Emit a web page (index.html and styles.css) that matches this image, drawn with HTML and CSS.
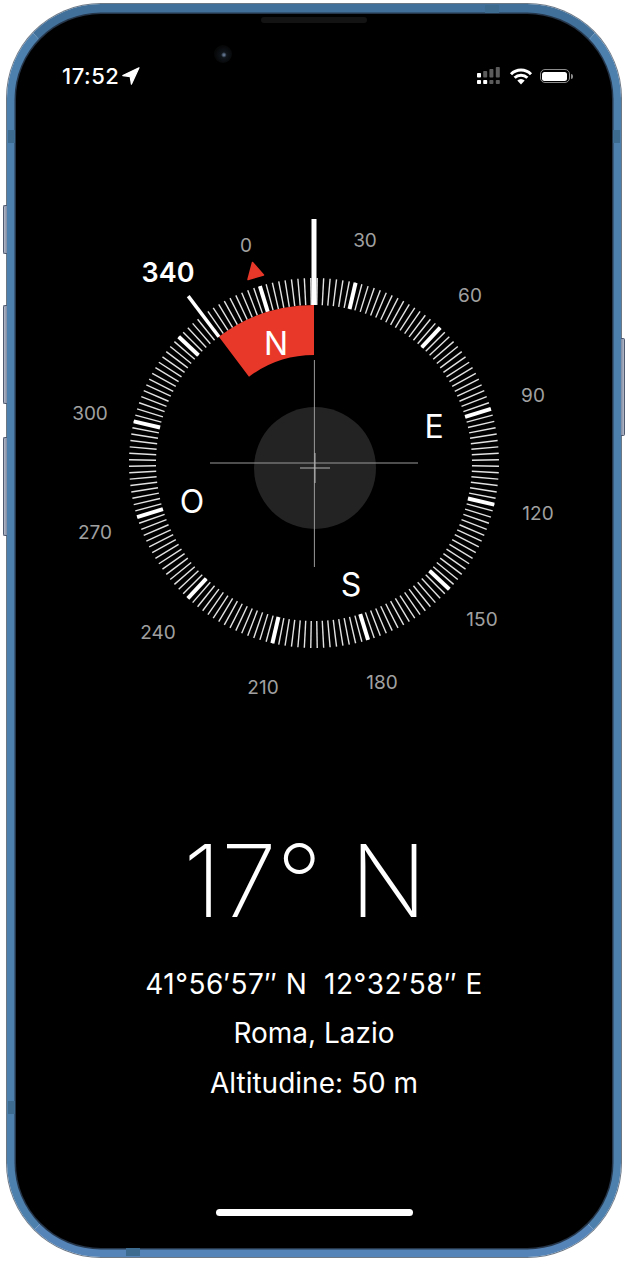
FILE: index.html
```html
<!DOCTYPE html>
<html lang="it">
<head>
<meta charset="utf-8">
<title>Bussola</title>
<link rel="stylesheet" href="styles.css">
</head>
<body>
<div class="phone">
  <span class="btn btn-mute"></span>
  <span class="btn btn-up"></span>
  <span class="btn btn-down"></span>
  <span class="btn btn-power"></span>
  <span class="band band-top"></span>
  <span class="band band-bottom"></span>
  <span class="band band-left"></span>
  <span class="band band-right"></span>
  <span class="band band-left2"></span>
  <main class="screen">
    <span class="speaker"></span>
    <span class="camera"></span>
    <header class="status">
      <div class="status-left">
        <span class="time">17:52</span>
        <svg class="arrow" width="18" height="18" viewBox="0 0 18 18"><path d="M17 .8 .8 8.6 8.2 9.6 9.4 17.2Z" stroke="#fff" stroke-width="1.2" stroke-linejoin="round" fill="#fff"/></svg>
      </div>
      <div class="status-right">
        <svg class="signal" width="24" height="18" viewBox="0 0 24 18">
          <rect class="on" x="0" y="13" width="4" height="4" rx=".8"/>
          <rect class="on" x="6.2" y="13" width="4" height="4" rx=".8"/>
          <rect class="dim" x="12.4" y="13" width="4" height="4" rx=".8"/>
          <rect class="dim" x="18.8" y="13" width="4" height="4" rx=".8"/>
          <rect class="on" x="0" y="6" width="4" height="4.6" rx=".8"/>
          <rect class="dim" x="6.2" y="4" width="4" height="6.6" rx=".8"/>
          <rect class="dim" x="12.4" y="2" width="4" height="8.6" rx=".8"/>
          <rect class="dim" x="18.8" y="0" width="4" height="10.6" rx=".8"/>
        </svg>
        <svg class="wifi" width="24" height="17" viewBox="0 0 24 17">
          <path d="M2 6.2A14.2 14.2 0 0 1 22 6.2" class="arc"/>
          <path d="M5.6 9.8A9.1 9.1 0 0 1 18.4 9.8" class="arc"/>
          <path d="M12 16.4 8.3 12.6A5.2 5.2 0 0 1 15.7 12.6Z" fill="#fff"/>
        </svg>
        <div class="battery"><span class="battery-fill"></span></div>
        <span class="nub"></span>
      </div>
    </header>

    <svg class="compass" width="596" height="500" viewBox="16 200 596 500">
      <defs>
        <line id="t1" x1="0" y1="-185" x2="0" y2="-158" class="minor"/>
        <g id="t3"><use href="#t1"/><use href="#t1" transform="rotate(2)"/><use href="#t1" transform="rotate(4)"/></g>
        <g id="t15"><use href="#t3"/><use href="#t3" transform="rotate(6)"/><use href="#t3" transform="rotate(12)"/><use href="#t3" transform="rotate(18)"/><use href="#t3" transform="rotate(24)"/></g>
        <line id="m" x1="0" y1="-185" x2="0" y2="-158" class="major"/>
      </defs>
      <g transform="translate(314 463) rotate(-17)">
        <use href="#t15"/><use href="#t15" transform="rotate(30)"/><use href="#t15" transform="rotate(60)"/><use href="#t15" transform="rotate(90)"/>
        <use href="#t15" transform="rotate(120)"/><use href="#t15" transform="rotate(150)"/><use href="#t15" transform="rotate(180)"/><use href="#t15" transform="rotate(210)"/>
        <use href="#t15" transform="rotate(240)"/><use href="#t15" transform="rotate(270)"/><use href="#t15" transform="rotate(300)"/><use href="#t15" transform="rotate(330)"/>
        <use href="#m"/><use href="#m" transform="rotate(30)"/><use href="#m" transform="rotate(60)"/><use href="#m" transform="rotate(90)"/>
        <use href="#m" transform="rotate(120)"/><use href="#m" transform="rotate(150)"/><use href="#m" transform="rotate(180)"/><use href="#m" transform="rotate(210)"/>
        <use href="#m" transform="rotate(240)"/><use href="#m" transform="rotate(270)"/><use href="#m" transform="rotate(300)"/><use href="#m" transform="rotate(330)"/>
      </g>
      <g transform="translate(314 463)">
        <path class="sector" d="M0 -158A158 158 0 0 0 -95.1 -126.2L-65 -86.3A108 108 0 0 1 0 -108Z"/>
        <line class="needle" x1="0" y1="-158" x2="0" y2="-209" transform="rotate(-37)"/>
        <line class="heading" x1="0" y1="-158" x2="0" y2="-244"/>
      </g>
      <path class="sector" d="M252.5 262.5 263.5 275 248 279.5Z" stroke="#e8382a" stroke-width="1.5" stroke-linejoin="round"/>

      <circle class="bubble" cx="315" cy="468" r="61"/>
      <line class="cross" x1="314.4" y1="360" x2="314.4" y2="567"/>
      <line class="cross" x1="210" y1="463" x2="418" y2="463"/>
      <line class="level" x1="300" y1="468" x2="330" y2="468"/>
      <line class="level" x1="315" y1="453" x2="315" y2="483"/>

      <text class="num" x="246" y="252">0</text>
      <text class="num" x="365" y="247">30</text>
      <text class="num" x="470" y="302">60</text>
      <text class="num" x="533" y="402">90</text>
      <text class="num" x="538" y="520">120</text>
      <text class="num" x="482" y="626">150</text>
      <text class="num" x="382" y="689">180</text>
      <text class="num" x="263" y="694">210</text>
      <text class="num" x="158" y="639">240</text>
      <text class="num" x="95" y="539">270</text>
      <text class="num" x="90" y="420">300</text>
      <text class="bearing" x="168" y="282">340</text>
      <text class="card" x="276" y="355">N</text>
      <text class="card" x="434" y="438">E</text>
      <text class="card" x="351" y="596">S</text>
      <text class="card" x="192" y="513">O</text>
    </svg>

    <section class="readout">
      <h1 class="direction">17° N</h1>
      <p class="line coords">41°56′57″ N&nbsp; 12°32′58″ E</p>
      <p class="line">Roma, Lazio</p>
      <p class="line">Altitudine: 50 m</p>
    </section>
    <div class="home"></div>
  </main>
</div>
</body>
</html>
```
FILE: styles.css
```css
* { box-sizing: border-box; }
html, body { margin: 0; background: #fff; }
body { width: 630px; height: 1264px; padding: 4px 0 0 7px; overflow: hidden; font-family: Inter, "Liberation Sans", sans-serif; color: #fff; }

.phone {
  position: relative;
  width: 614px;
  height: 1253px;
  border-style: solid;
  border-width: 10px 9px 9px;
  border-color: #41719b #4e80ae #5484b8;
  border-radius: 94px;
  box-shadow: 0 0 0 1px #6d7885;
}
.screen {
  position: relative;
  display: flex;
  flex-direction: column;
  height: 100%;
  background: #000;
  border-radius: 85px;
  box-shadow: 0 0 0 1.5px #26364a;
  overflow: hidden;
}

.btn { position: absolute; width: 4px; background: linear-gradient(90deg, #b4bac8, #7d88a0); border-radius: 2px 0 0 2px; border: 1px solid #4f5a70; border-right: 0; }
.btn-mute { left: -13px; top: 191px; height: 49px; }
.btn-up { left: -13px; top: 291px; height: 99px; }
.btn-down { left: -13px; top: 423px; height: 99px; }
.btn-power { right: -13px; top: 324px; height: 98px; border-radius: 0 2px 2px 0; border: 1px solid #4f5a70; border-left: 0; background: linear-gradient(90deg, #7d88a0, #b4bac8); }

.band { position: absolute; background: #3d6a8f; z-index: 2; }
.band-top { left: 469px; top: -9px; width: 14px; height: 8px; }
.band-bottom { left: 110px; bottom: -8px; width: 14px; height: 8px; }
.band-left { left: -8px; top: 116px; width: 7px; height: 13px; }
.band-right { right: -8px; top: 116px; width: 7px; height: 13px; }
.band-left2 { left: -8px; top: 1087px; width: 7px; height: 13px; }

.speaker { position: absolute; left: 245px; top: 3px; width: 106px; height: 6px; border-radius: 3px; background: #131313; }
.camera { position: absolute; left: 198px; top: 31px; width: 18px; height: 18px; border-radius: 50%; background: radial-gradient(circle at 55% 55%, #5d6f88 0 6%, #10161c 20%, #070809 60%, #040404 100%); }

.status { display: flex; justify-content: space-between; align-items: center; height: 124px; padding: 0 39px 0 46px; }
.status-left { display: flex; align-items: center; gap: 3px; }
.time { font-size: 22px; font-weight: 500; line-height: 24px; letter-spacing: .5px; }
.status-right { display: flex; align-items: center; }
.signal { margin-right: 8px; }
.signal .on { fill: #fff; }
.signal .dim { fill: #5c5c5c; }
.wifi { margin-right: 7px; }
.wifi .arc { fill: none; stroke: #fff; stroke-width: 3; }
.battery { width: 30px; height: 14px; border: 1.5px solid #8c8c8c; border-radius: 5px; padding: 1.5px; }
.battery-fill { display: block; height: 100%; background: #fff; border-radius: 2.5px; }
.nub { width: 2px; height: 5px; margin-left: 1.5px; background: #8c8c8c; border-radius: 0 2px 2px 0; }

.compass { display: block; margin-top: 62px; }
.minor { stroke: #e2e2e2; stroke-width: 1.4; }
.major { stroke: #fff; stroke-width: 4; }
.sector { fill: #e8382a; }
.needle { stroke: #fff; stroke-width: 3.5; }
.heading { stroke: #fff; stroke-width: 5; }
.bubble { fill: #232323; }
.cross { stroke: #9a9a9a; stroke-width: 1; }
.level { stroke: #b4b4b4; stroke-width: 1; }
.num { font-size: 19px; fill: #a0a0a0; text-anchor: middle; }
.bearing { font-size: 27px; font-weight: 600; fill: #fff; text-anchor: middle; }
.card { font-size: 32px; fill: #fff; text-anchor: middle; }

.readout { display: flex; flex-direction: column; align-items: center; margin-top: 121px; }
.direction { margin: 0; padding-right: 18px; font-size: 100px; font-weight: 220; line-height: 120px; white-space: nowrap; }
.line { margin: 0; font-size: 28px; line-height: 49.5px; white-space: nowrap; }
.coords { margin-top: 18.5px; letter-spacing: .5px; }

.home { position: absolute; left: 200px; top: 1195px; width: 197px; height: 7px; border-radius: 4px; background: #fff; }
```
